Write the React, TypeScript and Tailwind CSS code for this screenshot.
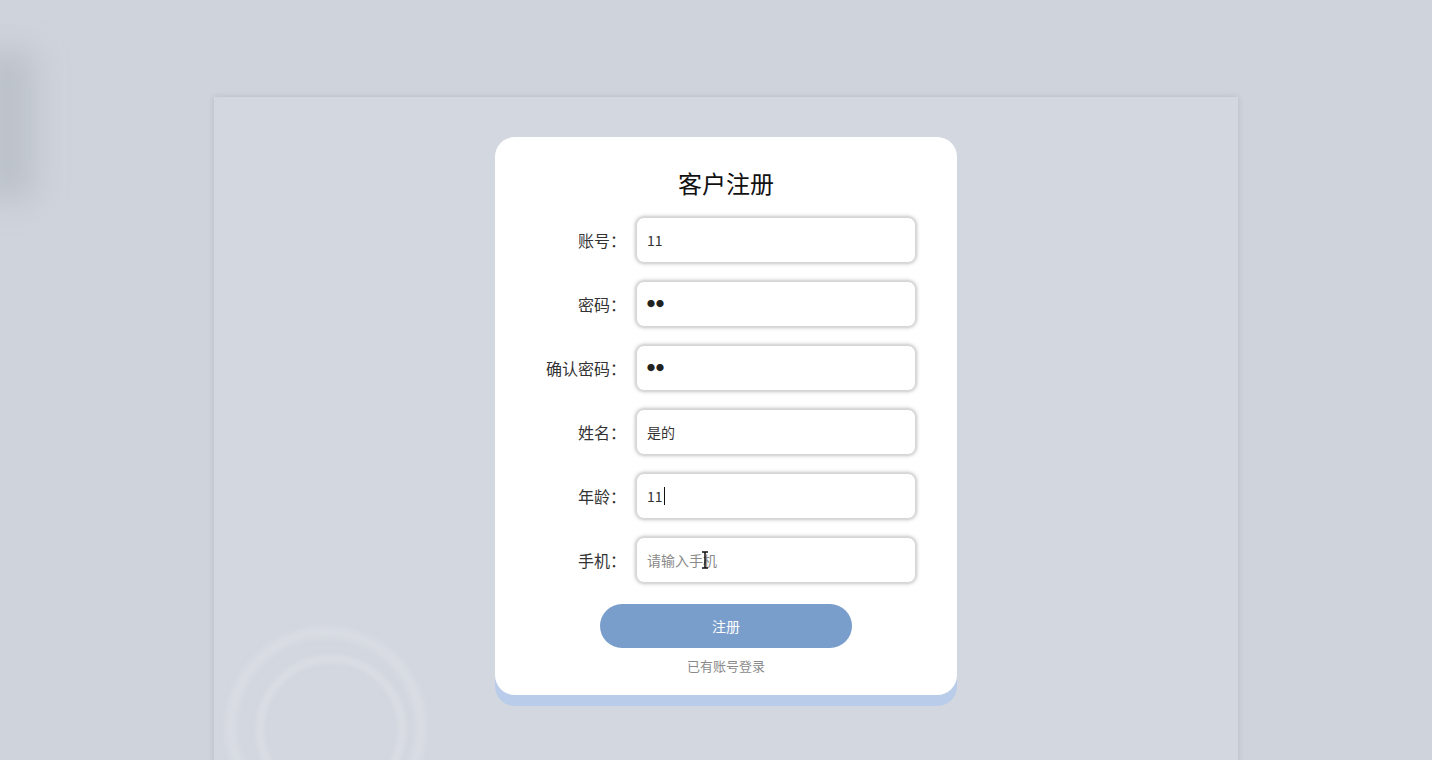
import React from "react";

const font = { fontFamily: '"Noto Sans CJK SC", "Noto Sans", sans-serif' };

function Row({ label, children }: { label: string; children: React.ReactNode }) {
  return (
    <div className="flex items-center">
      <div className="w-[131px] text-right text-[16px] text-[#333]">{label}：</div>
      <div className="ml-[10px] relative w-[280px] h-[46px] rounded-[8px] bg-white border border-[#d6d6d6] shadow-[0_0_4px_rgba(0,0,0,0.35)] flex items-center px-[10px] text-[14px] text-[#333]">
        {children}
      </div>
    </div>
  );
}

export default function App() {
  return (
    <div className="relative w-[1432px] h-[760px] overflow-hidden bg-[#cfd3dc]" style={font}>
      {/* decorative blurs */}
      <div className="absolute left-[-20px] top-[50px] w-[55px] h-[150px] bg-[#b4bac3] blur-[16px] opacity-70" />

      <div className="absolute left-[214px] top-[97px] w-[1024px] h-[700px] bg-[#d3d7df] shadow-[0_0_6px_rgba(0,0,0,0.12)]">
        <div className="absolute left-[12px] top-[530px] w-[200px] h-[200px] rounded-full border-[10px] border-[#d9dde3] blur-[3px]" />
        <div className="absolute left-[42px] top-[558px] w-[150px] h-[150px] rounded-full border-[8px] border-[#d9dde3] blur-[2px]" />
      </div>

      <div className="relative ml-[495px] mt-[137px] w-[462px] rounded-[20px] bg-white shadow-[0_11px_0_#b9cce9] pt-[30px] pb-[20px]">
        <div className="text-center text-[24px] leading-[32px] text-[#111]">客户注册</div>
        <div className="mt-[18px] flex flex-col gap-[18px]">
          <Row label="账号">
            <span>11</span>
          </Row>
          <Row label="密码">
            <span className="text-[8px] tracking-[1px] text-[#222]">●●</span>
          </Row>
          <Row label="确认密码">
            <span className="text-[8px] tracking-[1px] text-[#222]">●●</span>
          </Row>
          <Row label="姓名">
            <span>是的</span>
          </Row>
          <Row label="年龄">
            <span>11</span>
            <span className="ml-[1px] inline-block w-[1px] h-[18px] bg-[#111]" />
          </Row>
          <Row label="手机">
            <span className="text-[#8a8a8a]">请输入手机</span>
            <svg className="absolute left-[64px] top-[13px]" width="8" height="18" viewBox="0 0 8 18">
              <path d="M1 1h6M4 1v16M1 17h6" stroke="#111" strokeWidth="1.5" fill="none" />
            </svg>
          </Row>
        </div>
        <div className="mt-[21px] flex justify-center">
          <button className="w-[252px] h-[44px] rounded-full bg-[#7a9ecb] text-white text-[14px]" style={font}>
            注册
          </button>
        </div>
        <div className="mt-[9px] text-center text-[13px] leading-[18px] text-[#8a8a8a]">已有账号登录</div>
      </div>
    </div>
  );
}
